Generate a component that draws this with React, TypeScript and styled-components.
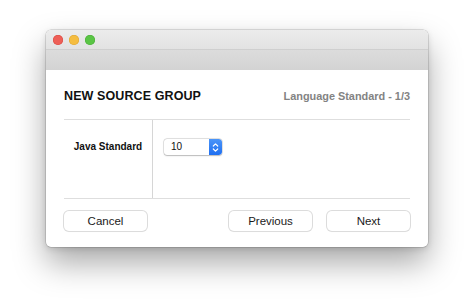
import React from "react";
import styled, { createGlobalStyle } from "styled-components";

const Global = createGlobalStyle`
  html, body { margin: 0; padding: 0; background: #ffffff; }
  body { font-family: "Liberation Sans", Arial, sans-serif; -webkit-font-smoothing: antialiased; }
`;

const Page = styled.div`
  width: 474px;
  height: 308px;
  box-sizing: border-box;
  padding: 30px 0 0 46px;
  background: #ffffff;
  overflow: hidden;
`;

const Window = styled.div`
  width: 382px;
  height: 217px;
  border-radius: 5px;
  background: #ffffff;
  display: flex;
  flex-direction: column;
  overflow: hidden;
  box-shadow: 0 0 0 0.5px rgba(0, 0, 0, 0.22), 0 16px 32px rgba(0, 0, 0, 0.34),
    0 2px 6px rgba(0, 0, 0, 0.12);
`;

const TitleBar = styled.div`
  height: 19px;
  border-bottom: 1px solid #cfcfcf;
  background: linear-gradient(#ececec, #e2e2e2);
  display: flex;
  align-items: center;
  gap: 6px;
  padding-left: 7px;
`;

const Light = styled.span<{ $c: string; $b: string }>`
  width: 10px;
  height: 10px;
  border-radius: 50%;
  background: ${(p) => p.$c};
  box-shadow: inset 0 0 0 0.5px ${(p) => p.$b};
`;

const Toolbar = styled.div`
  height: 20px;
  background: linear-gradient(#dcdcdc, #d3d3d3);
`;

const Content = styled.div`
  flex: 1;
  display: flex;
  flex-direction: column;
  padding: 18px 18px 0 18px;
`;

const Header = styled.div`
  height: 16px;
  display: flex;
  align-items: center;
  justify-content: space-between;
  padding-bottom: 15px;
  border-bottom: 1px solid #dedede;
`;

const Title = styled.div`
  font-size: 12.5px;
  font-weight: 700;
  color: #111111;
  letter-spacing: 0.1px;
`;

const Step = styled.div`
  font-size: 10.9px;
  font-weight: 700;
  color: #838383;
`;

const Middle = styled.div`
  height: 78px;
  display: grid;
  grid-template-columns: 89px 1fr;
  border-bottom: 1px solid #dedede;
`;

const LabelCol = styled.div`
  border-right: 1px solid #d6d6d6;
  display: flex;
  justify-content: center;
  padding-top: 21px;
  font-size: 10px;
  font-weight: 700;
  color: #111111;
`;

const FieldCol = styled.div`
  padding: 19px 0 0 11px;
`;

const Select = styled.div`
  width: 58px;
  height: 16px;
  display: flex;
  border-radius: 3px;
  background: #ffffff;
  box-shadow: 0 0 0 0.5px rgba(0, 0, 0, 0.18), 0 0.5px 1.5px rgba(0, 0, 0, 0.2);
  overflow: hidden;
`;

const SelectValue = styled.div`
  flex: 1;
  font-size: 10px;
  color: #111111;
  padding-left: 7px;
  line-height: 16px;
`;

const Stepper = styled.div`
  width: 13px;
  height: 16px;
  background: linear-gradient(#4b95f8, #1f6ff1);
  border-radius: 0 3px 3px 0;
  display: flex;
  align-items: center;
  justify-content: center;
`;

const Footer = styled.div`
  display: flex;
  align-items: center;
  gap: 15px;
  padding-top: 12px;
`;

const Spacer = styled.div`
  flex: 1;
`;

const Button = styled.button`
  width: 83px;
  height: 20px;
  border: none;
  border-radius: 5px;
  background: #ffffff;
  box-shadow: 0 0 0 1px #dcdcdc, 0 1px 1px rgba(0, 0, 0, 0.06);
  font-family: "Liberation Sans", Arial, sans-serif;
  font-size: 11.5px;
  color: #1a1a1a;
  padding: 0;
  margin: 0;
`;

export default function App() {
  return (
    <>
      <Global />
      <Page>
        <Window>
          <TitleBar>
            <Light $c="#ee5f57" $b="#d8483f" />
            <Light $c="#f5bd40" $b="#dca433" />
            <Light $c="#5ac545" $b="#48ab36" />
          </TitleBar>
          <Toolbar />
          <Content>
            <Header>
              <Title>NEW SOURCE GROUP</Title>
              <Step>Language Standard - 1/3</Step>
            </Header>
            <Middle>
              <LabelCol>Java Standard</LabelCol>
              <FieldCol>
                <Select>
                  <SelectValue>10</SelectValue>
                  <Stepper>
                    <svg width="7" height="11" viewBox="0 0 7 11">
                      <path d="M1.3 4 L3.5 1.8 L5.7 4" fill="none" stroke="#fff" strokeWidth="1.2" strokeLinecap="round" strokeLinejoin="round" />
                      <path d="M1.3 7 L3.5 9.2 L5.7 7" fill="none" stroke="#fff" strokeWidth="1.2" strokeLinecap="round" strokeLinejoin="round" />
                    </svg>
                  </Stepper>
                </Select>
              </FieldCol>
            </Middle>
            <Footer>
              <Button>Cancel</Button>
              <Spacer />
              <Button>Previous</Button>
              <Button>Next</Button>
            </Footer>
          </Content>
        </Window>
      </Page>
    </>
  );
}
